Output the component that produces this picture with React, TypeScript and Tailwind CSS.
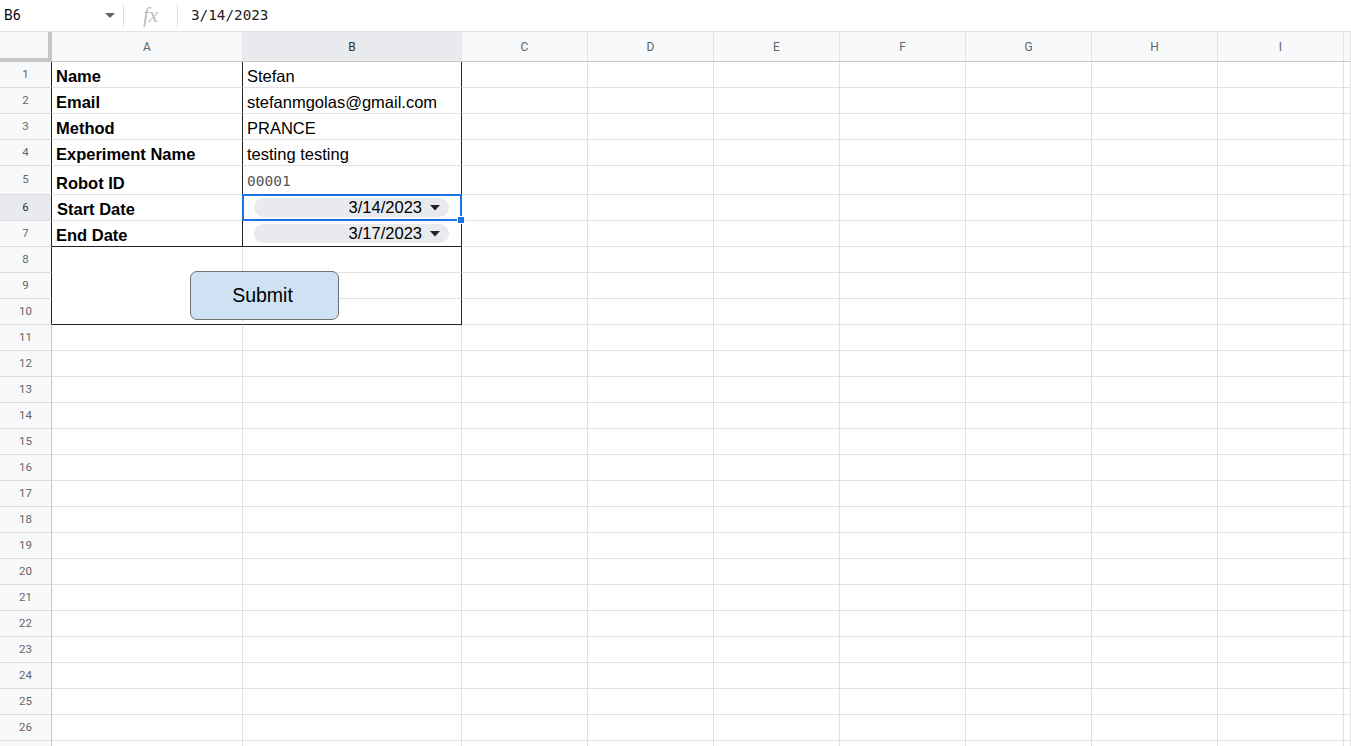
import React from 'react';

const COLS = ['A', 'B', 'C', 'D', 'E', 'F', 'G', 'H', 'I', ''];
const COL_W = ['w-[191px]', 'w-[219px]', 'w-[126px]', 'w-[126px]', 'w-[126px]', 'w-[126px]', 'w-[126px]', 'w-[126px]', 'w-[126px]', 'flex-1'];

const rows = Array.from({ length: 27 }, (_, i) => i + 1);

const labels: Record<number, string> = {
  1: 'Name',
  2: 'Email',
  3: 'Method',
  4: 'Experiment Name',
  5: 'Robot ID',
  6: 'Start Date',
  7: 'End Date',
};

const values: Record<number, string> = {
  1: 'Stefan',
  2: 'stefanmgolas@gmail.com',
  3: 'PRANCE',
  4: 'testing testing',
};

function Caret() {
  return (
    <svg width="10" height="6" viewBox="0 0 10 6" className="shrink-0">
      <path d="M0 0h10L5 5.5z" fill="#222" />
    </svg>
  );
}

function DateChip({ value }: { value: string }) {
  return (
    <div className="ml-[11px] flex h-[19px] w-[195px] items-center justify-end gap-[8px] rounded-full bg-[#e8eaed] pr-[9px]">
      <span className="text-[16.5px] leading-none text-black">{value}</span>
      <Caret />
    </div>
  );
}

function rowHeader(r: number) {
  const selected = r === 6;
  const inTable = r <= 10;
  return (
    <div
      className={
        'flex w-[52px] shrink-0 items-center justify-center border-b border-r font-["Roboto"] text-[11.5px] ' +
        (selected ? 'bg-[#e8eaed] text-[#333] ' : 'bg-[#f8f9fa] text-[#666] ') +
        (inTable ? 'border-b-[#dadce0] border-r-[#222]' : 'border-b-[#dadce0] border-r-[#c4c7c5]')
      }
    >
      {r < 27 ? r : ''}
    </div>
  );
}

function cellA(r: number) {
  let cls = 'relative flex w-[191px] shrink-0 items-end border-b border-r pb-[3px] pl-[4px] ';
  if (r <= 7) cls += 'border-r-[#222] ';
  else cls += 'border-r-[#e2e2e2] ';
  if (r === 7 || r === 10) cls += 'border-b-[#222] ';
  else if (r === 8 || r === 9) cls += 'border-b-transparent ';
  else cls += 'border-b-[#e2e2e2] ';
  return (
    <div className={cls}>
      {labels[r] && (
        <span className={'text-[16.5px] font-bold leading-none text-black ' + (r === 6 ? 'pl-[1px]' : '')}>
          {labels[r]}
        </span>
      )}
      {r === 9 && (
        <button className="absolute left-[138px] top-[-2px] z-10 flex h-[49px] w-[149px] items-center justify-center rounded-[7px] border border-[#707070] bg-[#cfe2f3] pr-[4px] text-[19.5px] text-black">
          Submit
        </button>
      )}
    </div>
  );
}

function cellB(r: number) {
  let cls = 'relative flex w-[219px] shrink-0 border-b border-r ';
  if (r <= 10) cls += 'border-r-[#222] ';
  else cls += 'border-r-[#e2e2e2] ';
  if (r === 7 || r === 10) cls += 'border-b-[#222] ';
  else cls += 'border-b-[#e2e2e2] ';
  if (r === 6 || r === 7) cls += 'items-center ';
  else if (r === 5) cls += 'items-start pt-[8px] pl-[4px] ';
  else cls += 'items-end pb-[3px] pl-[4px] ';
  return (
    <div className={cls}>
      {values[r] && <span className="text-[16.5px] leading-none text-black">{values[r]}</span>}
      {r === 5 && (
        <span className='font-["DejaVu_Sans_Mono"] text-[14.5px] leading-none text-[#555]'>00001</span>
      )}
      {r === 6 && <DateChip value="3/14/2023" />}
      {r === 7 && <DateChip value="3/17/2023" />}
      {r === 6 && (
        <div className="pointer-events-none absolute bottom-[-1px] left-[-1px] right-[-1px] top-[-1px] z-20 border-2 border-[#1a73e8]">
          <div className="absolute bottom-[-5px] right-[-5px] h-[8px] w-[8px] border border-white bg-[#1a73e8]" />
        </div>
      )}
    </div>
  );
}

export default function App() {
  return (
    <div className='h-[746px] w-[1351px] overflow-hidden bg-white font-["Liberation_Sans",Arial,sans-serif]'>
      {/* formula bar */}
      <div className="flex h-[32px] items-center border-b border-[#e2e2e2]">
        <div className='flex w-[123px] items-center justify-between pl-[4px] pr-[8px] font-["Roboto"] text-[14px] text-black'>
          <span>B6</span>
          <svg width="10" height="5" viewBox="0 0 10 5">
            <path d="M0 0h10L5 5z" fill="#666" />
          </svg>
        </div>
        <div className="h-[22px] w-px bg-[#dadce0]" />
        <div className='flex w-[53px] justify-center font-["Liberation_Serif"] text-[21px] italic leading-none text-[#bdbdbd]'>
          fx
        </div>
        <div className="h-[22px] w-px bg-[#dadce0]" />
        <span className='pl-[13px] font-["DejaVu_Sans_Mono"] text-[14.3px] text-[#222]'>3/14/2023</span>
      </div>

      {/* column headers */}
      <div className="flex h-[30px]">
        <div className="w-[52px] shrink-0 border-b-4 border-r-4 border-[#c4c7c5] bg-[#f8f9fa]" />
        {COLS.map((c, i) => (
          <div
            key={i}
            className={
              COL_W[i] +
              ' flex shrink-0 items-center justify-center border-b border-r border-b-[#c4c7c5] border-r-[#e2e2e2] font-["Roboto"] text-[12px] ' +
              (c === 'B' ? 'bg-[#e8eaed] text-[#333]' : 'bg-[#f8f9fa] text-[#5f6368]')
            }
          >
            {c}
          </div>
        ))}
      </div>

      {/* grid rows */}
      {rows.map((r) => (
        <div key={r} className={'flex ' + (r === 5 ? 'h-[29px]' : 'h-[26px]')}>
          {rowHeader(r)}
          {cellA(r)}
          {cellB(r)}
          {COLS.slice(2).map((_, i) => (
            <div
              key={i}
              className={COL_W[i + 2] + ' shrink-0 border-b border-r border-[#e2e2e2]'}
            />
          ))}
        </div>
      ))}
    </div>
  );
}
